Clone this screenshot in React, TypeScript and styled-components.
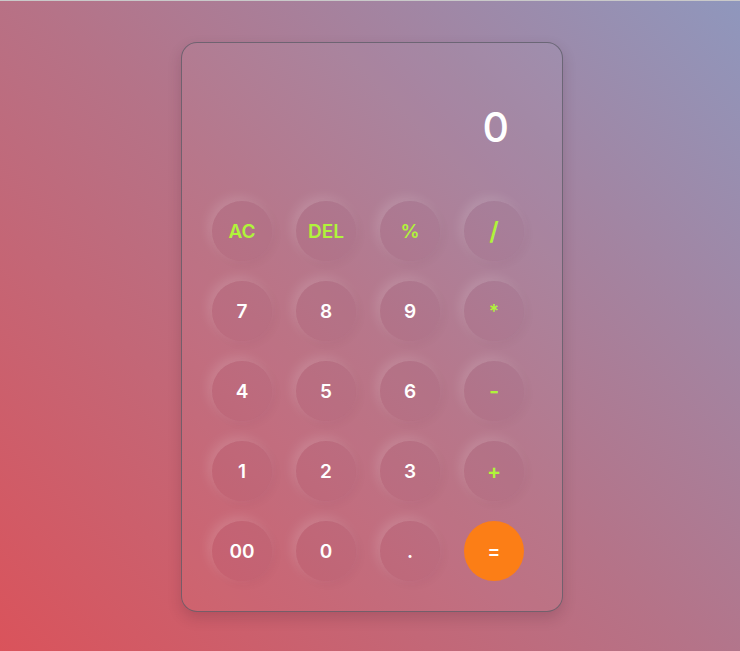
import React from "react";
import styled, { createGlobalStyle } from "styled-components";

const Global = createGlobalStyle`
  html, body { margin: 0; padding: 0; }
  body {
    min-height: 651px;
    font-family: Inter, "Open Sans", sans-serif;
    background: linear-gradient(45deg, #da535b 0%, #b57388 50%, #8f97bd 100%);
    border-top: 1px solid #c9c9c9;
    box-sizing: border-box;
  }
`;

const Page = styled.div`
  display: flex;
  justify-content: center;
  padding-top: 41px;
  padding-left: 4px;
`;

const Card = styled.div`
  width: 382px;
  box-sizing: border-box;
  border: 1px solid rgba(90, 90, 100, 0.75);
  border-radius: 16px;
  padding: 0 38px 30px 30px;
  background: rgba(255, 255, 255, 0.03);
  box-shadow: 0 6px 14px rgba(60, 20, 40, 0.18);
`;

const Display = styled.div`
  height: 158px;
  box-sizing: border-box;
  padding-top: 60px;
  padding-right: 15px;
  text-align: right;
  font-size: 41px;
  line-height: 48px;
  font-weight: 500;
  color: #ffffff;
`;

const Keys = styled.div`
  display: grid;
  grid-template-columns: repeat(4, 60px);
  column-gap: 24px;
  row-gap: 20px;
`;

type Kind = "num" | "op" | "eq";

const Key = styled.button<{ $kind: Kind }>`
  width: 60px;
  height: 60px;
  border-radius: 50%;
  border: none;
  padding: 0;
  font-family: inherit;
  font-size: 19px;
  font-weight: 600;
  cursor: pointer;
  display: flex;
  align-items: center;
  justify-content: center;
  color: ${(p) => (p.$kind === "op" ? "#b0f43a" : "#ffffff")};
  background: ${(p) => (p.$kind === "eq" ? "#fc7e16" : "rgba(120, 40, 70, 0.05)")};
  box-shadow: ${(p) =>
    p.$kind === "eq"
      ? "none"
      : "-4px -4px 12px rgba(255, 255, 255, 0.14), 3px 3px 8px rgba(90, 20, 50, 0.05)"};
`;

const keys: { label: string; kind: Kind; size?: number }[] = [
  { label: "AC", kind: "op" },
  { label: "DEL", kind: "op" },
  { label: "%", kind: "op" },
  { label: "/", kind: "op", size: 25 },
  { label: "7", kind: "num" },
  { label: "8", kind: "num" },
  { label: "9", kind: "num" },
  { label: "*", kind: "op" },
  { label: "4", kind: "num" },
  { label: "5", kind: "num" },
  { label: "6", kind: "num" },
  { label: "-", kind: "op", size: 22 },
  { label: "1", kind: "num" },
  { label: "2", kind: "num" },
  { label: "3", kind: "num" },
  { label: "+", kind: "op", size: 21 },
  { label: "00", kind: "num" },
  { label: "0", kind: "num" },
  { label: ".", kind: "num" },
  { label: "=", kind: "eq" },
];

export default function App() {
  return (
    <>
      <Global />
      <Page>
        <Card>
          <Display>0</Display>
          <Keys>
            {keys.map((k) => (
              <Key
                key={k.label}
                $kind={k.kind}
                style={k.size ? { fontSize: k.size } : undefined}
              >
                {k.label}
              </Key>
            ))}
          </Keys>
        </Card>
      </Page>
    </>
  );
}
